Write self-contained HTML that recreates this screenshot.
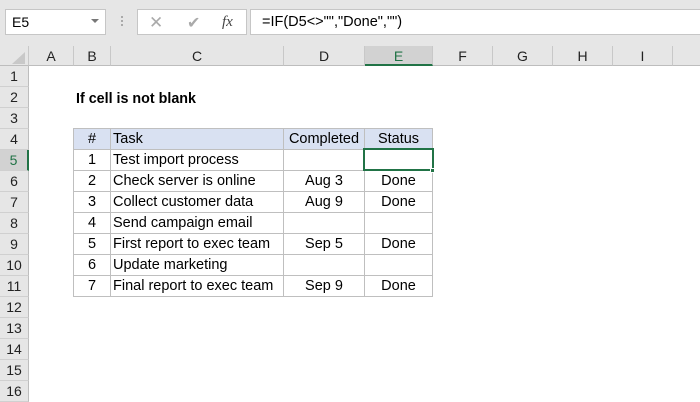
<!DOCTYPE html>
<html><head><style>
*{margin:0;padding:0;box-sizing:border-box}
body{width:700px;height:400px;overflow:hidden;background:#fff;font-family:"Liberation Sans",Arial,sans-serif;position:relative}
.a{position:absolute}
.top{left:0;top:0;width:700px;height:46px;background:#e6e6e6}
.box{background:#fff;border:1px solid #c6c6c6}
.ch{top:46px;height:20px;background:#e6e6e6;border-right:1px solid #c8c8c8;border-bottom:1px solid #bdbdbd;font-size:14px;color:#222;text-align:center;line-height:21px}
.rh{left:0;width:29px;height:21px;background:#e6e6e6;border-right:1px solid #bdbdbd;border-bottom:1px solid #d0d0d0;font-size:14px;color:#222;text-align:center;line-height:21px}
.c{height:21px;border-right:1px solid #bfbfbf;border-bottom:1px solid #bfbfbf;font-size:14.5px;line-height:21px;color:#000;white-space:nowrap;overflow:hidden}
.ctr{text-align:center}
</style></head><body>
<div class="a top"></div>
<div class="a box" style="left:5px;top:9px;width:101px;height:26px;font-size:14px;line-height:24px;padding-left:6px">E5</div>
<div class="a" style="left:91px;top:19px;width:0;height:0;border-left:4px solid transparent;border-right:4px solid transparent;border-top:4px solid #777"></div>
<div class="a" style="left:121px;top:16px;width:2px;height:2px;background:#aaa;box-shadow:0 4px 0 #aaa,0 8px 0 #aaa"></div>
<div class="a box" style="left:137px;top:9px;width:110px;height:26px"></div>
<div class="a" style="left:149px;top:13px;font-size:17px;color:#aaa">&#x2715;</div>
<div class="a" style="left:187px;top:13px;font-size:16px;color:#aaa">&#x2714;</div>
<div class="a" style="left:222px;top:14px;font-size:15px;color:#444;font-family:'Liberation Serif',serif;font-style:italic">fx</div>
<div class="a box" style="left:250px;top:9px;width:460px;height:26px;font-size:14.5px;line-height:24px;padding-left:11px">=IF(D5&lt;&gt;"","Done","")</div>
<div class="a" style="left:0;top:46px;width:29px;height:20px;background:#e6e6e6;border-right:1px solid #c8c8c8;border-bottom:1px solid #bdbdbd"></div>
<div class="a" style="left:12px;top:52px;width:0;height:0;border-left:13px solid transparent;border-bottom:12px solid #c8c8c8"></div>
<div class="a ch" style="left:29px;width:45px">A</div>
<div class="a ch" style="left:74px;width:37px">B</div>
<div class="a ch" style="left:111px;width:173px">C</div>
<div class="a ch" style="left:284px;width:81px">D</div>
<div class="a ch" style="left:365px;width:68px;background:#d2d2d2;border-bottom:2px solid #217346;color:#217346">E</div>
<div class="a ch" style="left:433px;width:60px">F</div>
<div class="a ch" style="left:493px;width:60px">G</div>
<div class="a ch" style="left:553px;width:60px">H</div>
<div class="a ch" style="left:613px;width:60px">I</div>
<div class="a ch" style="left:673px;width:40px;border-right:none"></div>
<div class="a rh" style="top:66px">1</div>
<div class="a rh" style="top:87px">2</div>
<div class="a rh" style="top:108px">3</div>
<div class="a rh" style="top:129px">4</div>
<div class="a rh" style="top:150px;background:#d2d2d2;border-right:2px solid #217346;color:#217346">5</div>
<div class="a rh" style="top:171px">6</div>
<div class="a rh" style="top:192px">7</div>
<div class="a rh" style="top:213px">8</div>
<div class="a rh" style="top:234px">9</div>
<div class="a rh" style="top:255px">10</div>
<div class="a rh" style="top:276px">11</div>
<div class="a rh" style="top:297px">12</div>
<div class="a rh" style="top:318px">13</div>
<div class="a rh" style="top:339px">14</div>
<div class="a rh" style="top:360px">15</div>
<div class="a rh" style="top:381px">16</div>
<div class="a" style="left:76px;top:89px;font-size:14.3px;font-weight:bold;line-height:21px">If cell is not blank</div>
<div class="a" style="left:73px;top:128px;width:360px;height:169px;border-left:1px solid #bfbfbf;border-top:1px solid #bfbfbf"></div>
<div class="a c ctr" style="left:74px;top:129px;width:37px;background:#d9e1f2">#</div>
<div class="a c" style="left:111px;top:129px;width:173px;background:#d9e1f2;padding-left:2px">Task</div>
<div class="a c ctr" style="left:284px;top:129px;width:81px;background:#d9e1f2">Completed</div>
<div class="a c ctr" style="left:365px;top:129px;width:68px;background:#d9e1f2">Status</div>

<div class="a c ctr" style="left:74px;top:150px;width:37px">1</div>
<div class="a c" style="left:111px;top:150px;width:173px;padding-left:2px">Test import process</div>
<div class="a c ctr" style="left:284px;top:150px;width:81px"></div>
<div class="a c ctr" style="left:365px;top:150px;width:68px"></div>

<div class="a c ctr" style="left:74px;top:171px;width:37px">2</div>
<div class="a c" style="left:111px;top:171px;width:173px;padding-left:2px">Check server is online</div>
<div class="a c ctr" style="left:284px;top:171px;width:81px">Aug 3</div>
<div class="a c ctr" style="left:365px;top:171px;width:68px">Done</div>

<div class="a c ctr" style="left:74px;top:192px;width:37px">3</div>
<div class="a c" style="left:111px;top:192px;width:173px;padding-left:2px">Collect customer data</div>
<div class="a c ctr" style="left:284px;top:192px;width:81px">Aug 9</div>
<div class="a c ctr" style="left:365px;top:192px;width:68px">Done</div>

<div class="a c ctr" style="left:74px;top:213px;width:37px">4</div>
<div class="a c" style="left:111px;top:213px;width:173px;padding-left:2px">Send campaign email</div>
<div class="a c ctr" style="left:284px;top:213px;width:81px"></div>
<div class="a c ctr" style="left:365px;top:213px;width:68px"></div>

<div class="a c ctr" style="left:74px;top:234px;width:37px">5</div>
<div class="a c" style="left:111px;top:234px;width:173px;padding-left:2px">First report to exec team</div>
<div class="a c ctr" style="left:284px;top:234px;width:81px">Sep 5</div>
<div class="a c ctr" style="left:365px;top:234px;width:68px">Done</div>

<div class="a c ctr" style="left:74px;top:255px;width:37px">6</div>
<div class="a c" style="left:111px;top:255px;width:173px;padding-left:2px">Update marketing</div>
<div class="a c ctr" style="left:284px;top:255px;width:81px"></div>
<div class="a c ctr" style="left:365px;top:255px;width:68px"></div>

<div class="a c ctr" style="left:74px;top:276px;width:37px">7</div>
<div class="a c" style="left:111px;top:276px;width:173px;padding-left:2px">Final report to exec team</div>
<div class="a c ctr" style="left:284px;top:276px;width:81px">Sep 9</div>
<div class="a c ctr" style="left:365px;top:276px;width:68px">Done</div>
<div class="a" style="left:363px;top:148px;width:71px;height:23px;border:2px solid #217346"></div>
<div class="a" style="left:430px;top:168px;width:5px;height:5px;background:#217346;border:1px solid #fff"></div>
</body></html>
